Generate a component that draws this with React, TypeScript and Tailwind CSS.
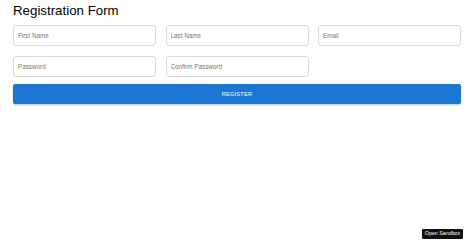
import React from "react";

const inputCls =
  "h-[21px] w-full rounded-[3px] border border-[#dadada] bg-white px-[4px] text-[6.3px] text-[#333] placeholder:text-[#777] outline-none";

export default function App() {
  return (
    <div className="relative h-[248px] w-[474px] bg-white" style={{ fontFamily: '"Liberation Sans", Arial, sans-serif' }}>
      <div className="px-[13px] pt-[3px]">
        <h1 className="text-[13.3px] leading-[16px] text-black">Registration Form</h1>
        <div className="mt-[6px] grid w-[448px] grid-cols-3 gap-x-[9.5px] gap-y-[10px]">
          <input className={inputCls} placeholder="First Name" />
          <input className={inputCls} placeholder="Last Name" />
          <input className={inputCls} placeholder="Email" />
          <input className={inputCls} placeholder="Password" type="password" />
          <input className={inputCls} placeholder="Confirm Password" type="password" />
        </div>
        <button className="mt-[7px] flex h-[20px] w-[448px] items-center justify-center rounded-[2px] bg-[#1976d2] text-[5.7px] tracking-[0.2px] text-white shadow-[0_1px_2px_rgba(0,0,0,0.25)]">
          REGISTER
        </button>
      </div>
      <div className="absolute left-[422px] top-[229px] flex h-[10px] w-[41px] items-center justify-center rounded-[1px] bg-[#111] text-[5.3px] text-white">
        Open Sandbox
      </div>
    </div>
  );
}
